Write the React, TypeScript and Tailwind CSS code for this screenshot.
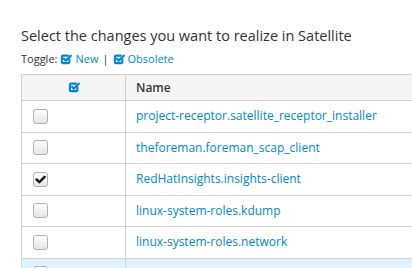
import React from "react";

const ROWS = [
  { name: "project-receptor.satellite_receptor_installer", checked: false },
  { name: "theforeman.foreman_scap_client", checked: false },
  { name: "RedHatInsights.insights-client", checked: true },
  { name: "linux-system-roles.kdump", checked: false },
  { name: "linux-system-roles.network", checked: false },
  { name: "", checked: false, active: true },
];

function CheckSquare({ size = 11 }: { size?: number }) {
  return (
    <svg width={size} height={size} viewBox="0 0 16 16" fill="none" className="inline-block">
      <path d="M12.5 8.5v3.5a1.5 1.5 0 0 1-1.5 1.5H4A1.5 1.5 0 0 1 2.5 12V5A1.5 1.5 0 0 1 4 3.5h6.5"
        stroke="#0088ce" strokeWidth="2.8" strokeLinecap="round" />
      <path d="M5.2 7.6l2.6 2.6 6.6-6.6" stroke="#0088ce" strokeWidth="3" strokeLinecap="round" strokeLinejoin="round" />
    </svg>
  );
}

function Box({ checked }: { checked: boolean }) {
  return (
    <span className="inline-flex items-center justify-center w-[15px] h-[15px] rounded-[3px] border border-[#b0b0b0] bg-gradient-to-b from-white to-[#e6e6e6]">
      {checked && (
        <svg width="11" height="9" viewBox="0 0 11 9" fill="none">
          <path d="M1.6 4.5l2.7 2.6L9.6 1.8" stroke="#1a1a1a" strokeWidth="2.5" strokeLinecap="round" strokeLinejoin="round" />
        </svg>
      )}
    </span>
  );
}

export default function App() {
  return (
    <div className="w-[412px] h-[268px] overflow-hidden bg-white pl-[21px] pt-[26px] text-[#363636] font-['Open_Sans',sans-serif]">
      <h2 className="text-[14.5px] leading-[20px] text-[#333]">Select the changes you want to realize in Satellite</h2>
      <div className="mt-[5px] flex items-center gap-[3px] text-[11px] leading-[16px] text-[#363636]">
        <span>Toggle:</span>
        <a className="flex items-center gap-[3px] text-[#0088ce]"><CheckSquare size={12} /> New</a>
        <span className="px-[1px]">|</span>
        <a className="flex items-center gap-[3px] text-[#0088ce]"><CheckSquare size={12} /> Obsolete</a>
      </div>
      <table className="mt-[7px] w-[430px] border-collapse text-[12px]">
        <thead>
          <tr className="h-[26px] bg-[#f5f5f5]">
            <th className="w-[104px] border border-[#d1d1d1] p-0 text-center align-middle">
              <span className="inline-flex translate-y-[1px]"><CheckSquare size={12} /></span>
            </th>
            <th className="border border-[#d1d1d1] pl-[10px] text-left font-semibold text-[#363636]">Name</th>
          </tr>
        </thead>
        <tbody>
          {ROWS.map((r, i) => (
            <tr key={i} className={r.active ? "h-[31.5px] bg-[#def3ff]" : "h-[31.5px]"}>
              <td className={r.active ? "border border-[#bfe4f7] pl-[11px] align-middle" : "border border-[#d1d1d1] pl-[11px] align-middle"}>
                <span className="flex"><Box checked={r.checked} /></span>
              </td>
              <td className={r.active ? "border border-[#bfe4f7] pl-[10px]" : "border border-[#d1d1d1] pl-[10px]"}>
                <a className="text-[#0088ce]">{r.name}</a>
              </td>
            </tr>
          ))}
        </tbody>
      </table>
    </div>
  );
}
